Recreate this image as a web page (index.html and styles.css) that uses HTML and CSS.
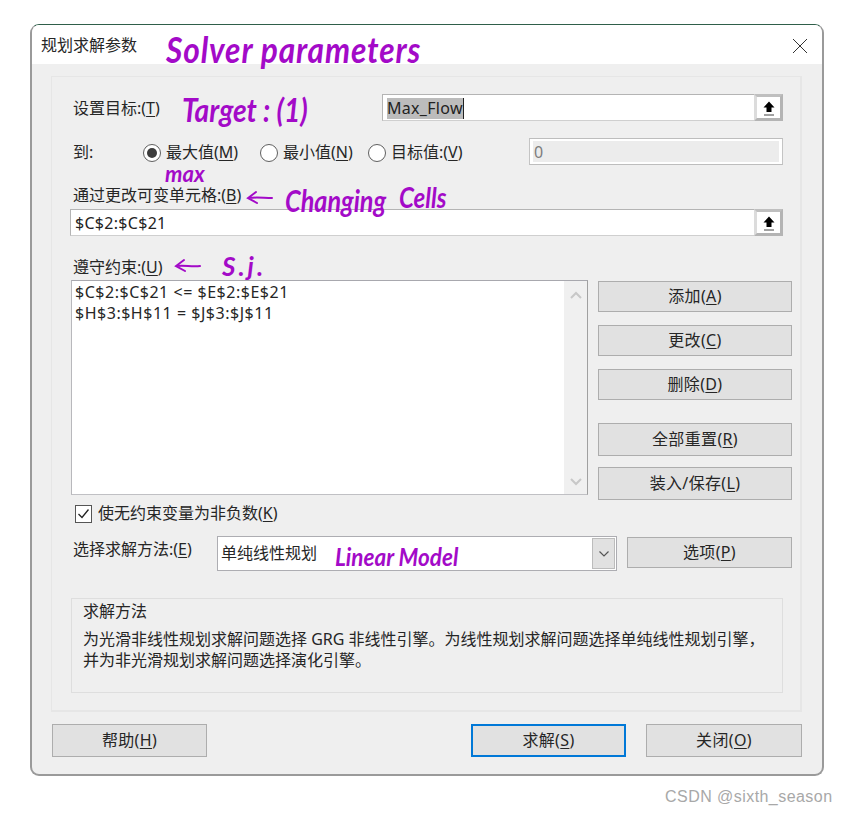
FILE: index.html
```html
<!DOCTYPE html>
<html lang="zh-CN">
<head>
<meta charset="utf-8">
<title>规划求解参数</title>
<link rel="stylesheet" href="styles.css">
</head>
<body>
<div class="dialog">
  <header class="titlebar">
    <span class="title">规划求解参数</span>
    <svg class="close" width="16" height="16" viewBox="0 0 16 16"><path d="M1 1L15 15M15 1L1 15" stroke="#333" stroke-width="1" fill="none"/></svg>
  </header>
  <div class="content">
    <section class="panel">
      <div class="row row-target">
        <label class="row-label">设置目标:(<u>T</u>)</label>
        <div class="field field-target">
          <span class="field-text"><span class="selected">Max_Flow</span><span class="caret"></span></span>
          <span class="ref-btn"><svg width="20" height="20" viewBox="0 0 20 20"><path d="M10 3.5L15.5 9.5H12.5V14H7.5V9.5H4.5Z" fill="#000"/><path d="M5 17H15" stroke="#444" stroke-width="1.2"/></svg></span>
        </div>
      </div>
      <div class="row row-to">
        <label class="row-label to-label">到:</label>
        <div class="radios">
          <span class="radio-item item-max"><span class="radio on"></span>最大值(<u>M</u>)</span>
          <span class="radio-item item-min"><span class="radio"></span>最小值(<u>N</u>)</span>
          <span class="radio-item"><span class="radio"></span>目标值:(<u>V</u>)</span>
        </div>
        <div class="value-box"><span class="value-inner">0</span></div>
      </div>
      <div class="caption caption-cells">通过更改可变单元格:(<u>B</u>)</div>
      <div class="row">
        <div class="field field-wide">
          <span class="field-text">$C$2:$C$21</span>
          <span class="ref-btn"><svg width="20" height="20" viewBox="0 0 20 20"><path d="M10 3.5L15.5 9.5H12.5V14H7.5V9.5H4.5Z" fill="#000"/><path d="M5 17H15" stroke="#444" stroke-width="1.2"/></svg></span>
        </div>
      </div>
      <div class="caption caption-cons">遵守约束:(<u>U</u>)</div>
      <div class="constraints">
        <div class="listbox">
          <div class="list-lines">
            <div>$C$2:$C$21 &lt;= $E$2:$E$21</div>
            <div>$H$3:$H$11 = $J$3:$J$11</div>
          </div>
          <div class="scrollbar">
            <svg width="14" height="9" viewBox="0 0 14 9"><path d="M2 7L7 2L12 7" stroke="#c8c8c8" stroke-width="2" fill="none"/></svg>
            <svg width="14" height="9" viewBox="0 0 14 9"><path d="M2 2L7 7L12 2" stroke="#c8c8c8" stroke-width="2" fill="none"/></svg>
          </div>
        </div>
        <div class="side-buttons">
          <button class="btn side">添加(<u>A</u>)</button>
          <button class="btn side">更改(<u>C</u>)</button>
          <button class="btn side">删除(<u>D</u>)</button>
          <button class="btn side tall group-start">全部重置(<u>R</u>)</button>
          <button class="btn side tall">装入/保存(<u>L</u>)</button>
        </div>
      </div>
      <div class="check-row">
        <span class="checkbox"><svg width="15" height="15" viewBox="0 0 15 15"><path d="M2.5 8L6 11.5L12.5 3.5" stroke="#222" stroke-width="1.3" fill="none"/></svg></span>
        <span>使无约束变量为非负数(<u>K</u>)</span>
      </div>
      <div class="method-row">
        <label class="method-label">选择求解方法:(<u>E</u>)</label>
        <div class="combo">
          <span class="combo-text">单纯线性规划</span>
          <span class="combo-btn"><svg width="12" height="8" viewBox="0 0 12 8"><path d="M1.5 1.5L6 6L10.5 1.5" stroke="#555" stroke-width="1.2" fill="none"/></svg></span>
        </div>
        <button class="btn options">选项(<u>P</u>)</button>
      </div>
      <div class="info">
        <div class="info-title">求解方法</div>
        <p class="info-text">为光滑非线性规划求解问题选择 GRG 非线性引擎。为线性规划求解问题选择单纯线性规划引擎，<br>并为非光滑规划求解问题选择演化引擎。</p>
      </div>
    </section>
  </div>
  <footer class="footer">
    <button class="btn foot">帮助(<u>H</u>)</button>
    <div class="foot-right">
      <button class="btn foot primary">求解(<u>S</u>)</button>
      <button class="btn foot foot-close">关闭(<u>O</u>)</button>
    </div>
  </footer>

  <span class="ink ink-solver">Solver parameters</span>
  <span class="ink ink-target">Target : (1)</span>
  <span class="ink ink-max">max</span>
  <span class="ink ink-changing">Changing</span>
  <span class="ink ink-cells">Cells</span>
  <span class="ink ink-sj">S.j.</span>
  <span class="ink ink-linear">Linear Model</span>
  <svg class="ink-arrow arrow-a" width="28" height="16" viewBox="0 0 28 16"><path d="M10 2L2 8L11 13M3 8C10 7 18 8 26 8" stroke="#a30ac8" stroke-width="2" fill="none" stroke-linecap="round"/></svg>
  <svg class="ink-arrow arrow-b" width="28" height="16" viewBox="0 0 28 16"><path d="M10 2L2 8L11 13M3 8C10 7 18 9 26 8" stroke="#a30ac8" stroke-width="2" fill="none" stroke-linecap="round"/></svg>
</div>
<div class="watermark">CSDN @sixth_season</div>
</body>
</html>
```
FILE: styles.css
```css
* { box-sizing: border-box; }
html, body { margin: 0; padding: 0; background: #fff; }
body {
  width: 847px; height: 814px; overflow: hidden; position: relative;
  font-family: "Noto Sans", "Noto Sans CJK SC", sans-serif;
  font-size: 16px; line-height: 21px; color: #262626;
}
u { text-underline-offset: 2px; text-decoration-thickness: 1px; }

.dialog {
  position: relative; width: 794px; height: 752px; margin: 24px 0 0 30px;
  display: flex; flex-direction: column; background: #efefef;
  border: 2px solid #9a9a9a; border-top: 1px solid #2f5f4a;
  border-radius: 9px; overflow: hidden;
}
.titlebar {
  height: 39px; background: #fff; display: flex; align-items: center;
  justify-content: space-between; padding: 0 14px 0 9px; flex: none;
}
.title { position: relative; top: 1px; }
.close { position: relative; top: 1px; }

.content { flex: none; padding: 12px 0 0 19px; }
.panel {
  width: 751px; height: 636px; border: 2px solid #e6e6e6; border-width: 1px 2px 2px 1px;
  padding: 17px 0 0 18px; background: #efefef;
}
.row { width: 713px; display: flex; align-items: center; }
.row-label { width: 312px; padding-left: 3px; position: relative; top: 1px; }

.field {
  height: 27px; background: #fff; display: flex; align-items: center; justify-content: space-between;
  border: 1px solid #b4b4b4; border-bottom-color: #cfcfcf; border-right: 0;
}
.field-target { width: 401px; }
.field-wide { width: 713px; }
.field-text {
  padding-left: 4px; display: flex; align-items: center; height: 21px; color: #222;
  letter-spacing: 0.3px; position: relative; top: 1px;
}
.selected { background: #bcbcbc; height: 21px; }
.caret { width: 1px; height: 21px; background: #222; }
.ref-btn {
  width: 29px; height: 27px; margin: -1px 0; border: 3px solid #bdbdbd; border-color: #bfbfbf #b4b4b4 #b4b4b4 #dcdcdc;
  background: #fff; display: flex; align-items: center; justify-content: center;
}

.row-to { margin-top: 17px; height: 27px; position: relative; }
.to-label { width: 73px; top: 1px; }
.radios { display: flex; width: 386px; position: relative; top: 1px; }
.radio-item { display: flex; align-items: center; color: #262626; }
.item-max { width: 117px; }
.item-min { width: 108px; }
.radio {
  width: 18px; height: 18px; border: 1px solid #5f5f5f; border-radius: 50%; background: #fff;
  margin-right: 5px; display: flex; align-items: center; justify-content: center; flex: none;
}
.radio.on::after { content: ""; width: 10px; height: 10px; border-radius: 50%; background: #3c3c3c; }
.value-box {
  width: 254px; height: 27px; border: 1px solid #b9b9b9; border-color: #bdbdbd #c4c4c4 #bdbdbd #c4c4c4;
  background: #fff; padding: 2px 3px;
}
.value-inner { display: block; height: 21px; background: #ececec; color: #7d7d7d; padding-left: 1px; line-height: 23px; }

.caption { height: 21px; padding-left: 3px; margin-bottom: 2px; }
.caption-cells { margin-top: 20px; margin-bottom: 3px; }
.caption-cons { margin-top: 21px; }

.constraints { display: flex; width: 722px; gap: 10px; align-items: flex-start; padding-left: 1px; }
.listbox {
  width: 517px; height: 215px; border: 1px solid #a8a8ae; border-bottom-color: #c0c0c4; border-left-color: #b8b8bc;
  border-right-color: #a0a0a0; background: #fff; display: flex; justify-content: space-between;
}
.list-lines { padding: 1px 0 0 3px; letter-spacing: 0.52px; }
.scrollbar {
  width: 23px; background: #f0f0f0; display: flex; flex-direction: column;
  justify-content: space-between; align-items: center; padding: 10px 0 8px;
}
.side-buttons { width: 194px; display: flex; flex-direction: column; gap: 13px; padding-top: 1px; }
.btn {
  font: inherit; color: #262626; background: #e1e1e1; border: 1px solid #adadad; padding: 0;
  display: flex; align-items: center; justify-content: center; white-space: pre; letter-spacing: 0.35px;
}
.side { height: 31px; }
.tall { height: 33px; }
.group-start { margin-top: 10px; }
.side.tall + .side.tall { margin-top: -2px; }

.check-row { display: flex; align-items: center; height: 21px; margin-top: 3px; padding-left: 5px; }
.checkbox {
  width: 17px; height: 18px; border: 1px solid #555; background: #fff; margin-right: 6px;
  display: flex; align-items: center; justify-content: center;
}
.method-row { display: flex; align-items: flex-start; margin-top: 12px; width: 722px; }
.method-label { width: 147px; padding-left: 3px; position: relative; top: 3px; }
.combo {
  width: 400px; height: 35px; background: #fff; border: 1px solid #adadb2; display: flex;
  justify-content: space-between; align-items: center; padding-left: 3px;
}
.combo-btn {
  width: 23px; height: 31px; margin-right: 1px; background: #e1e1e1; border: 1px solid #bcbcbc;
  display: flex; align-items: center; justify-content: center;
}
.options { width: 165px; height: 31px; margin: 1px 0 0 10px; }

.info {
  width: 712px; height: 95px; margin: 27px 0 0 1px; border: 1px solid #dedede; padding: 2px 0 0 11px;
}
.info-title { height: 21px; }
.info-text { margin: 7px 0 0; line-height: 21px; }

.footer {
  flex: none; display: flex; justify-content: space-between; padding: 12px 20px 0 20px;
}
.foot-right { display: flex; gap: 20px; }
.foot { width: 155px; height: 33px; }
.foot-close { width: 156px; }
.primary { border: 2px solid #0078d7; }

.ink {
  position: absolute; color: #a30ac8; font-family: "Lato", sans-serif; font-style: italic; font-weight: 700;
  white-space: nowrap; line-height: 1;
  transform-origin: left top;
}
.ink-solver { left: 134px; top: 6px; font-size: 36px; transform: scaleX(0.88); letter-spacing: 1px; }
.ink-target { left: 150px; top: 69px; font-size: 32px; transform: scaleX(0.88); }
.ink-max { left: 133px; top: 138px; font-size: 22px; }
.ink-changing { left: 253px; top: 160px; font-size: 30px; transform: scaleX(0.84); }
.ink-cells { left: 367px; top: 158px; font-size: 28px; transform: scaleX(0.86); }
.ink-sj { left: 190px; top: 228px; font-size: 26px; letter-spacing: 3px; }
.ink-linear { left: 303px; top: 519px; font-size: 25px; transform: scaleX(0.9); }
.ink-arrow { position: absolute; }
.arrow-a { left: 214px; top: 165px; }
.arrow-b { left: 142px; top: 233px; }

.watermark {
  position: absolute; left: 665px; top: 787px; color: #a8a8a8;
  font-family: "Liberation Sans", sans-serif; font-size: 16px; line-height: 20px; letter-spacing: 0.45px;
}
```
